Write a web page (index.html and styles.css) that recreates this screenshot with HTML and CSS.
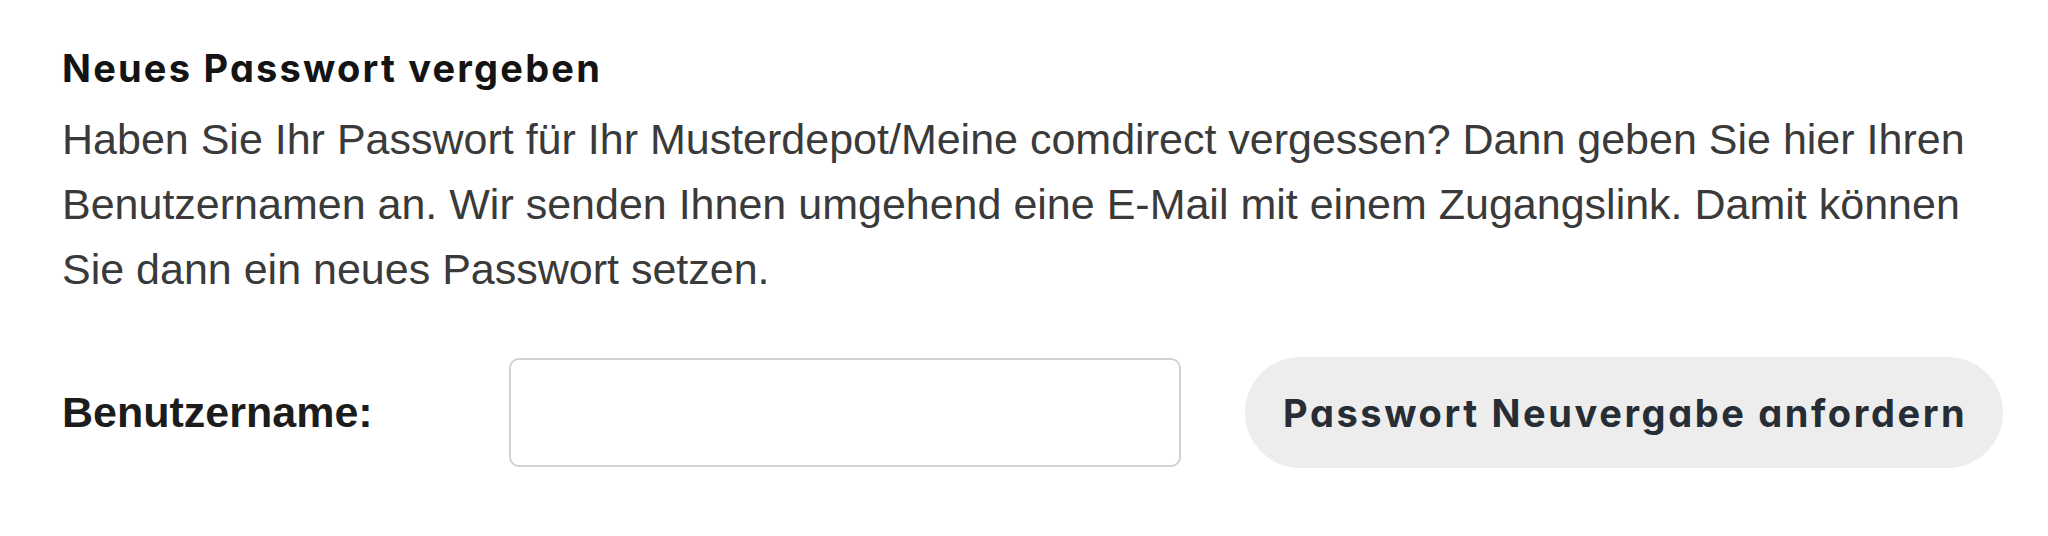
FILE: index.html
```html
<!DOCTYPE html>
<html lang="de">
<head>
<meta charset="utf-8">
<title>Neues Passwort vergeben</title>
<link rel="stylesheet" href="styles.css">
</head>
<body>
<main class="page">
  <h2 class="title">Neues Passwort vergeben</h2>
  <p class="intro">Haben Sie Ihr Passwort für Ihr Musterdepot/Meine comdirect vergessen? Dann geben Sie hier Ihren Benutzernamen an. Wir senden Ihnen umgehend eine E-Mail mit einem Zugangslink. Damit können Sie dann ein neues Passwort setzen.</p>
  <form class="form-row">
    <label class="label" for="user">Benutzername:</label>
    <input class="field" id="user" type="text">
    <button class="btn" type="button">Passwort Neuvergabe anfordern</button>
  </form>
</main>
</body>
</html>
```

FILE: styles.css
```css
html, body {
  margin: 0;
  padding: 0;
  background: #ffffff;
}

.page {
  padding: 46px 0 0 62px;
}

.title {
  margin: 0;
  font-family: Inter, "Noto Sans", sans-serif;
  font-feature-settings: "cv11" 1;
  font-weight: 700;
  font-size: 38px;
  line-height: 44px;
  color: #141414;
  letter-spacing: 2.2px;
}

.intro {
  margin: 17px 0 0 0;
  max-width: 1940px;
  font-family: "Liberation Sans", Arial, sans-serif;
  font-size: 43px;
  line-height: 65px;
  color: #3a3a3a;
}

.form-row {
  display: flex;
  align-items: center;
  margin-top: 55px;
}

.label {
  flex: 0 0 447px;
  font-family: "Liberation Sans", Arial, sans-serif;
  font-weight: 700;
  font-size: 43px;
  color: #1c1c1c;
}

.field {
  box-sizing: border-box;
  width: 672px;
  height: 109px;
  border: 2px solid #d2d2d2;
  border-radius: 10px;
  background: #fff;
  margin: 0;
}

.btn {
  box-sizing: border-box;
  height: 111px;
  margin-left: 64px;
  padding: 0 36px 0 38px;
  border: none;
  border-radius: 56px;
  background: #ededed;
  font-family: Inter, "Noto Sans", sans-serif;
  font-feature-settings: "cv11" 1;
  font-weight: 700;
  font-size: 38px;
  letter-spacing: 2.6px;
  color: #272d35;
}
```
